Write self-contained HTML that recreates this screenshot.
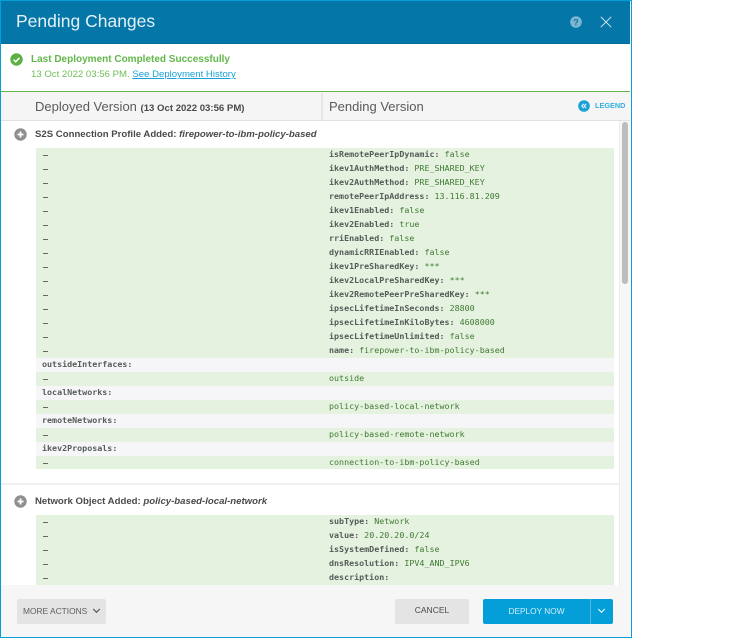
<!DOCTYPE html>
<html><head><meta charset="utf-8"><style>
html,body{margin:0;padding:0;width:744px;height:638px;overflow:hidden;background:#fff}
body{font-family:"Liberation Sans",sans-serif;position:relative}
div,a,span.a{position:absolute;white-space:nowrap}
#w{left:0;top:0;width:744px;height:638px;filter:blur(.3px)}
.r{left:36px;width:578px;height:14px}
.g{background:#e5f2df}
.w{background:#f6f6f8}
.m{font-family:"DejaVu Sans Mono",monospace;font-size:8.35px;line-height:14px;font-weight:bold;color:#555b58;top:-1px}
.l{left:6px}.p{left:293px}
.m i{font-style:normal;font-weight:normal;color:#3f7a33}
.d{left:6.5px;top:6.5px;width:5px;height:1.4px;background:#666}
.t{font-size:9.6px;font-weight:bold;color:#4a4a4a;left:35px}
.t i{font-weight:bold}
</style></head><body><div id="w">
<div style="left:0;top:0;width:632px;height:638px;background:#fff"></div>

<!-- content -->
<div class="t" style="top:129px;line-height:12px">S2S Connection Profile Added: <i>firepower-to-ibm-policy-based</i></div>
<svg style="position:absolute;left:14px;top:128px" width="13" height="13"><circle cx="6.5" cy="6.5" r="6.2" fill="#8f8f8f"/><path d="M3.5 6.5h6M6.5 3.5v6" stroke="#fff" stroke-width="1.8"/></svg>

<div class="g" style="left:36px;top:148px;width:578px;height:321px"></div>
<div class="r" style="top:148px"><div class="d"></div><div class="m p">isRemotePeerIpDynamic: <i>false</i></div></div>
<div class="r" style="top:162px"><div class="d"></div><div class="m p">ikev1AuthMethod: <i>PRE_SHARED_KEY</i></div></div>
<div class="r" style="top:176px"><div class="d"></div><div class="m p">ikev2AuthMethod: <i>PRE_SHARED_KEY</i></div></div>
<div class="r" style="top:190px"><div class="d"></div><div class="m p">remotePeerIpAddress: <i>13.116.81.209</i></div></div>
<div class="r" style="top:204px"><div class="d"></div><div class="m p">ikev1Enabled: <i>false</i></div></div>
<div class="r" style="top:218px"><div class="d"></div><div class="m p">ikev2Enabled: <i>true</i></div></div>
<div class="r" style="top:232px"><div class="d"></div><div class="m p">rriEnabled: <i>false</i></div></div>
<div class="r" style="top:246px"><div class="d"></div><div class="m p">dynamicRRIEnabled: <i>false</i></div></div>
<div class="r" style="top:260px"><div class="d"></div><div class="m p">ikev1PreSharedKey: <i>***</i></div></div>
<div class="r" style="top:274px"><div class="d"></div><div class="m p">ikev2LocalPreSharedKey: <i>***</i></div></div>
<div class="r" style="top:288px"><div class="d"></div><div class="m p">ikev2RemotePeerPreSharedKey: <i>***</i></div></div>
<div class="r" style="top:302px"><div class="d"></div><div class="m p">ipsecLifetimeInSeconds: <i>28800</i></div></div>
<div class="r" style="top:316px"><div class="d"></div><div class="m p">ipsecLifetimeInKiloBytes: <i>4608000</i></div></div>
<div class="r" style="top:330px"><div class="d"></div><div class="m p">ipsecLifetimeUnlimited: <i>false</i></div></div>
<div class="r" style="top:344px"><div class="d"></div><div class="m p">name: <i>firepower-to-ibm-policy-based</i></div></div>
<div class="r w" style="top:358px"><div class="m l">outsideInterfaces:</div></div>
<div class="r" style="top:372px"><div class="d"></div><div class="m p"><i>outside</i></div></div>
<div class="r w" style="top:386px"><div class="m l">localNetworks:</div></div>
<div class="r" style="top:400px"><div class="d"></div><div class="m p"><i>policy-based-local-network</i></div></div>
<div class="r w" style="top:414px"><div class="m l">remoteNetworks:</div></div>
<div class="r" style="top:428px"><div class="d"></div><div class="m p"><i>policy-based-remote-network</i></div></div>
<div class="r w" style="top:442px"><div class="m l">ikev2Proposals:</div></div>
<div class="r" style="top:456px"><div class="d"></div><div class="m p"><i>connection-to-ibm-policy-based</i></div></div>

<div style="left:1px;top:483px;width:618px;height:2px;background:#f0f0f0"></div>

<div class="t" style="top:496px;line-height:12px">Network Object Added: <i>policy-based-local-network</i></div>
<svg style="position:absolute;left:14px;top:495px" width="13" height="13"><circle cx="6.5" cy="6.5" r="6.2" fill="#8f8f8f"/><path d="M3.5 6.5h6M6.5 3.5v6" stroke="#fff" stroke-width="1.8"/></svg>

<div class="g" style="left:36px;top:515px;width:578px;height:70px"></div>
<div class="r" style="top:515px"><div class="d"></div><div class="m p">subType: <i>Network</i></div></div>
<div class="r" style="top:529px"><div class="d"></div><div class="m p">value: <i>20.20.20.0/24</i></div></div>
<div class="r" style="top:543px"><div class="d"></div><div class="m p">isSystemDefined: <i>false</i></div></div>
<div class="r" style="top:557px"><div class="d"></div><div class="m p">dnsResolution: <i>IPV4_AND_IPV6</i></div></div>
<div class="r" style="top:571px"><div class="d"></div><div class="m p">description:</div></div>

<!-- scrollbar -->
<div style="left:619px;top:121px;width:11px;height:464px;background:#f7f7f7;border-left:1px solid #ececec;box-sizing:border-box"></div>
<div style="left:622px;top:122px;width:6px;height:162px;background:#bdbdbd;border-radius:3px"></div>

<!-- header -->
<div style="left:1px;top:1px;width:629px;height:42px;background:#0477a8;border-bottom:1px solid #056a94"></div>
<div style="left:16px;top:10px;font-size:17.5px;line-height:22px;color:#e6f1f6">Pending Changes</div>
<svg style="position:absolute;left:570px;top:16px" width="12" height="12"><circle cx="6" cy="6" r="5.8" fill="#7fb6d0"/><text x="6" y="9.3" font-family="Liberation Sans" font-size="9" font-weight="bold" fill="#0477a8" text-anchor="middle">?</text></svg>
<svg style="position:absolute;left:600px;top:16px" width="12" height="12"><path d="M.8.8L11.2 11.2M11.2.8L.8 11.2" stroke="#d6e8f0" stroke-width="1" fill="none"/></svg>

<!-- status -->
<svg style="position:absolute;left:10px;top:53px" width="13" height="13"><circle cx="6.5" cy="6.5" r="6.2" fill="#5cb041"/><path d="M3.6 6.7l2.1 2.1 3.8-4" stroke="#fff" stroke-width="1.5" fill="none"/></svg>
<div style="left:31px;top:54px;font-size:10px;line-height:12px;font-weight:bold;color:#62b74a">Last Deployment Completed Successfully</div>
<div style="left:31px;top:69px;font-size:9.6px;line-height:12px;color:#6fbd58">13 Oct 2022 03:56 PM. <a style="position:static;color:#1a9fd6;text-decoration:underline">See Deployment History</a></div>
<div style="left:1px;top:91px;width:629px;height:1px;background:#5fb548"></div>

<!-- column header -->
<div style="left:1px;top:92px;width:629px;height:29px;background:#f5f5f5;border-bottom:1px solid #e2e2e2;box-sizing:border-box"></div>
<div style="left:321px;top:93px;width:2px;height:27px;background:#e6e6e6"></div>
<div style="left:35px;top:98px;font-size:13px;line-height:17px;color:#5a5a5a">Deployed Version <span style="font-size:9.6px;font-weight:bold;color:#4a4a4a">(13 Oct 2022 03:56 PM)</span></div>
<div style="left:329px;top:98px;font-size:13px;line-height:17px;color:#5a5a5a">Pending Version</div>
<svg style="position:absolute;left:578px;top:100px" width="12" height="12"><circle cx="6" cy="6" r="5.8" fill="#1ba0d8"/><path d="M5.8 3.8L3.8 6l2 2.2M8.2 3.8L6.2 6l2 2.2" stroke="#fff" stroke-width="1" fill="none"/></svg>
<div style="left:595px;top:101px;font-size:7.3px;line-height:10px;font-weight:bold;color:#35aee0">LEGEND</div>

<!-- footer -->
<div style="left:1px;top:585px;width:629px;height:52px;background:#f6f6f6"></div>
<div style="left:17px;top:599px;width:89px;height:25px;background:#e4e4e4;border-radius:2px"></div>
<div style="left:23px;top:605px;font-size:8.4px;line-height:12px;color:#5e5e5e">MORE ACTIONS</div>
<svg style="position:absolute;left:92px;top:608px" width="9" height="6"><path d="M1.2 1l3.3 3.3L7.8 1" stroke="#555" stroke-width="1.2" fill="none"/></svg>
<div style="left:395px;top:599px;width:74px;height:25px;background:#e4e4e4;border-radius:2px;text-align:center;font-size:8.5px;line-height:22px;color:#4a4a4a">CANCEL</div>
<div style="left:483px;top:599px;width:130px;height:25px;background:#049fd9;border-radius:2px"></div>
<div style="left:483px;top:599px;width:107px;height:25px;text-align:center;font-size:8.3px;line-height:25px;color:#d4eef9">DEPLOY NOW</div>
<div style="left:590px;top:599px;width:1px;height:25px;background:#4fb9e3"></div>
<svg style="position:absolute;left:597px;top:608px" width="9" height="6"><path d="M1.2 1l3.3 3.3L7.8 1" stroke="#e3f4fb" stroke-width="1.2" fill="none"/></svg>

<!-- modal border -->
<div style="left:0;top:0;width:632px;height:638px;border:1px solid #049fd9;box-sizing:border-box"></div>
</div></body></html>
